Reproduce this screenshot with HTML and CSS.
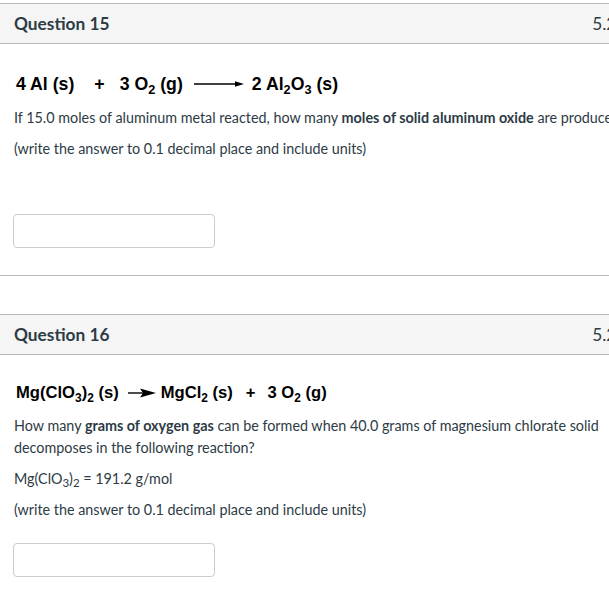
FILE: index.html
```html
<!DOCTYPE html>
<html>
<head>
<meta charset="utf-8">
<link rel="stylesheet" href="styles.css">
</head>
<body>
<div class="page">
  <div class="question q15">
    <div class="q-header">
      <span class="q-title">Question 15</span>
      <span class="q-points">5.2 pts</span>
    </div>
    <div class="q-body">
      <div class="eq eq-one">
        <span>4 Al (s)</span>
        <span class="op">+</span>
        <span>3 O<sub>2</sub> (g)</span>
        <svg class="arrow-long" width="50" height="10" viewBox="0 0 50 10"><line x1="0" y1="5" x2="43" y2="5" stroke="#000" stroke-width="1.3"/><path d="M41 2.3 L50 5 L41 7.7 Z" fill="#000"/></svg>
        <span>2 Al<sub>2</sub>O<sub>3</sub> (s)</span>
      </div>
      <p>If 15.0 moles of aluminum metal reacted, how many <strong>moles of solid aluminum oxide</strong> are produced?</p>
      <p>(write the answer to 0.1 decimal place and include units)</p>
      <p>&nbsp;</p>
      <input class="answer answer-one" type="text">
    </div>
  </div>

  <div class="question q16">
    <div class="q-header">
      <span class="q-title">Question 16</span>
      <span class="q-points">5.2 pts</span>
    </div>
    <div class="q-body body-two">
      <div class="eq eq-two">
        <span>Mg(ClO<sub>3</sub>)<sub>2</sub> (s)</span>
        <svg class="arrow-short" width="28" height="12" viewBox="0 0 28 12"><line x1="0" y1="6" x2="16" y2="6" stroke="#000" stroke-width="1.4"/><path d="M12 1.5 L28 6 L12 10.5 L15 6 Z" fill="#000"/></svg>
        <span>MgCl<sub>2</sub> (s)</span>
        <span class="op">+</span>
        <span>3 O<sub>2</sub> (g)</span>
      </div>
      <p>How many <strong>grams of oxygen gas</strong> can be formed when 40.0 grams of magnesium chlorate solid decomposes in the following reaction?</p>
      <p>Mg(ClO<sub class="small">3</sub>)<sub class="small">2</sub> = 191.2 g/mol</p>
      <p>(write the answer to 0.1 decimal place and include units)</p>
      <input class="answer" type="text">
    </div>
  </div>
</div>
</body>
</html>
```

FILE: styles.css
```css
html, body {
  margin: 0;
  padding: 0;
  overflow: hidden;
  background: #fff;
}

body {
  font-family: Lato, "Open Sans", sans-serif;
  color: #2d3b45;
}

.page {
  width: 660px;
  padding-top: 3px;
}

.question {
  border-top: 1px solid #b4b9bd;
  border-bottom: 1px solid #b4b9bd;
  margin-bottom: 38px;
}

.q-header {
  display: flex;
  justify-content: space-between;
  align-items: center;
  height: 39px;
  padding: 0 16px 0 14px;
  background: #f5f5f5;
  border-bottom: 1px solid #b4b9bd;
  font-size: 17.3px;
}

.q-title {
  font-weight: 700;
}

.q-points {
  font-weight: 400;
}

.q-body {
  padding: 27px 14px 27px 14px;
}

.body-two {
  padding-top: 25px;
}

.eq {
  display: flex;
  align-items: center;
  height: 26px;
  padding-left: 2px;
  font-family: "Liberation Sans", Arial, sans-serif;
  font-weight: 700;
  color: #000;
  white-space: nowrap;
}

.eq-one {
  font-size: 17.7px;
  margin-bottom: 10px;
}

.eq-two {
  font-size: 16.6px;
  margin-bottom: 9px;
}

.eq sub {
  font-size: 0.72em;
  line-height: 0;
  vertical-align: -0.3em;
}

.eq-one .op {
  margin: 0 15px 0 20px;
}

.eq-two .op {
  margin: 0 12px 0 13px;
}

.arrow-long {
  margin: 0 8px 0 11px;
}

.arrow-short {
  margin: 0 5px 0 9px;
}

.q-body p {
  margin: 0 0 9px 0;
  font-size: 14.35px;
  line-height: 22px;
}

.q-body p strong {
  font-weight: 700;
}

.q-body p sub.small {
  font-size: 0.8em;
  line-height: 0;
  vertical-align: -0.25em;
}

.answer {
  display: block;
  box-sizing: border-box;
  width: 202px;
  height: 34px;
  margin: 22px 0 0 -1px;
  border: 1px solid #c7cdd1;
  border-radius: 4px;
  background: #fff;
  font-family: Lato, sans-serif;
  font-size: 14px;
}

.answer-one {
  margin-top: 23px;
}
```
